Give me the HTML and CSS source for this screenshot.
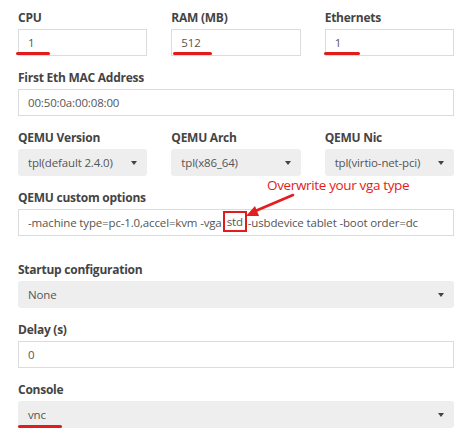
FILE: index.html
```html
<!DOCTYPE html>
<html>
<head>
<meta charset="utf-8">
<link rel="stylesheet" href="styles.css">
</head>
<body>
<div class="form">
  <div class="row3">
    <div class="field">
      <div class="label">CPU</div>
      <div class="input">1<span class="mark mark-cpu"></span></div>
    </div>
    <div class="field">
      <div class="label">RAM (MB)</div>
      <div class="input">512<span class="mark mark-ram"></span></div>
    </div>
    <div class="field">
      <div class="label">Ethernets</div>
      <div class="input">1<span class="mark mark-eth"></span></div>
    </div>
  </div>
  <div class="field">
    <div class="label">First Eth MAC Address</div>
    <div class="input">00:50:0a:00:08:00</div>
  </div>
  <div class="row3">
    <div class="field">
      <div class="label">QEMU Version</div>
      <div class="select"><span>tpl(default 2.4.0)</span><i class="caret"></i></div>
    </div>
    <div class="field">
      <div class="label">QEMU Arch</div>
      <div class="select"><span>tpl(x86_64)</span><i class="caret"></i></div>
    </div>
    <div class="field">
      <div class="label">QEMU Nic</div>
      <div class="select"><span>tpl(virtio-net-pci)</span><i class="caret"></i></div>
    </div>
  </div>
  <div class="field field-custom">
    <div class="label">QEMU custom options</div>
    <div class="input">-machine type=pc-1.0,accel=kvm -vga<span class="boxed">std</span>-usbdevice tablet -boot order=dc</div>
    <div class="note">Overwrite your vga type</div>
    <svg class="arrow" width="60" height="30" viewBox="0 0 60 30">
      <line x1="50" y1="3" x2="10" y2="20" stroke="#e41e1e" stroke-width="2.6" stroke-linecap="round"/>
      <polygon points="3,24 12,14 16,24" fill="#e41e1e"/>
    </svg>
  </div>
  <div class="field">
    <div class="label">Startup configuration</div>
    <div class="select"><span>None</span><i class="caret"></i></div>
  </div>
  <div class="field">
    <div class="label">Delay (s)</div>
    <div class="input">0</div>
  </div>
  <div class="field">
    <div class="label">Console</div>
    <div class="select"><span>vnc</span><i class="caret"></i><span class="mark mark-vnc"></span></div>
  </div>
</div>
</body>
</html>
```
FILE: styles.css
```css
html, body {
  margin: 0;
  padding: 0;
  background: #ffffff;
}
body {
  font-family: "Open Sans", "DejaVu Sans", sans-serif;
  color: #555;
}
.form {
  width: 436px;
  padding: 9px 20px 0 18px;
}
.row3 {
  display: grid;
  grid-template-columns: 1fr 1fr 1fr;
  column-gap: 24px;
}
.field {
  position: relative;
  margin-bottom: 13px;
}
.field-custom {
  margin-bottom: 25px;
}
.label {
  font-size: 12px;
  font-weight: 700;
  color: #444;
  line-height: 17px;
  margin-bottom: 3px;
  letter-spacing: -0.25px;
}
.input {
  position: relative;
  box-sizing: border-box;
  height: 27px;
  border: 1px solid #dcdcdc;
  background: #fff;
  padding: 0 0 0 9px;
  font-size: 11.5px;
  letter-spacing: -0.15px;
  line-height: 25px;
  color: #555;
  white-space: nowrap;
}
.select {
  position: relative;
  box-sizing: border-box;
  height: 27px;
  background: #eeeeee;
  border-radius: 3px;
  padding: 0 0 0 10px;
  font-size: 11.5px;
  letter-spacing: -0.15px;
  line-height: 27px;
  color: #555;
  display: flex;
  justify-content: space-between;
  align-items: center;
}
.caret {
  display: block;
  width: 0;
  height: 0;
  border-left: 3.5px solid transparent;
  border-right: 3.5px solid transparent;
  border-top: 4px solid #444;
  margin-right: 10px;
}
.mark {
  position: absolute;
  height: 3px;
  border-radius: 2px;
  background: #e21b1b;
}
.mark-cpu { left: -3px; top: 22px; width: 34px; }
.mark-ram { left: 1px; top: 22px; width: 39px; }
.mark-eth { left: -2px; top: 22px; width: 36px; }
.mark-vnc { left: 0; top: 24px; width: 44px; }
.boxed {
  display: inline-block;
  box-sizing: border-box;
  border: 2px solid #e21b1b;
  height: 21px;
  line-height: 17px;
  padding: 0 2px;
  margin: 0 1px;
  vertical-align: top;
  margin-top: 1px;
}
.note {
  position: absolute;
  left: 249px;
  top: -13px;
  font-size: 13.5px;
  letter-spacing: -0.35px;
  color: #e21b1b;
  line-height: 18px;
}
.arrow {
  position: absolute;
  left: 225px;
  top: 3px;
}
```
